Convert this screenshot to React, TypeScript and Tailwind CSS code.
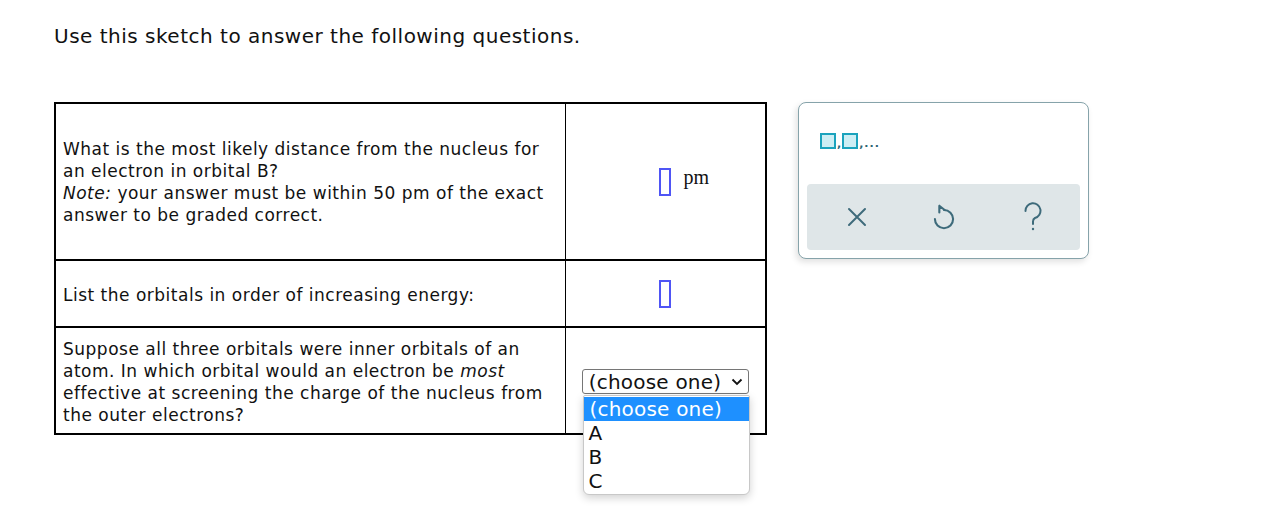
import React from "react";

const font = { fontFamily: '"DejaVu Sans", Verdana, sans-serif' };

function InputBox() {
  return <span className="inline-block w-[12px] h-[28px] border-2 border-[#4f55f5] bg-white align-middle" />;
}

function UndoIcon() {
  return (
    <svg width="28" height="28" viewBox="0 0 24 24" fill="none" stroke="#3e6b7b" strokeWidth="1.8" strokeLinecap="round" strokeLinejoin="round">
      <path d="M12 6 A7.8 7.8 0 1 1 4.2 13.8" />
      <path d="M8 2.5 L8 8.2 M8 2.5 L12.6 6" />
    </svg>
  );
}

function XIcon() {
  return (
    <svg width="22" height="22" viewBox="0 0 22 22" fill="none" stroke="#3e6b7b" strokeWidth="2" strokeLinecap="round">
      <path d="M3 3 L19 19 M19 3 L3 19" />
    </svg>
  );
}

function QIcon() {
  return (
    <svg width="22" height="30" viewBox="0 0 22 30" fill="none" stroke="#3e6b7b" strokeWidth="2" strokeLinecap="round">
      <path d="M3.5 9 A7.5 7.5 0 1 1 13 16 C11.5 16.8 11 17.8 11 19.5 L11 22" />
      <circle cx="11" cy="27" r="1.2" fill="#3e6b7b" stroke="none" />
    </svg>
  );
}

function SetIcon() {
  return (
    <div className="flex items-end">
      <span className="inline-block w-[16px] h-[16px] border-2 border-[#1ba3bd] bg-[#cdeef4]" />
      <span className="text-[#2c6372] text-[11px] leading-none ml-[1px] mr-[1px] font-bold">,</span>
      <span className="inline-block w-[16px] h-[16px] border-2 border-[#1ba3bd] bg-[#cdeef4]" />
      <span className="text-[#2c6372] text-[11px] leading-none ml-[1px] font-bold tracking-[1px]">,...</span>
    </div>
  );
}

export default function App() {
  return (
    <div className="bg-white w-[1286px] h-[528px] relative overflow-hidden text-[#111]" style={font}>
      <div className="pl-[54px] pt-[23px]">
        <div className="text-[20px] leading-[26px] tracking-[0.5px]">Use this sketch to answer the following questions.</div>
        <div className="flex items-start gap-[31px] mt-[53px]">
          <table className="border-collapse border-2 border-black w-[713px] text-[17px] leading-[22px] tracking-[0.5px]">
            <tbody>
              <tr className="h-[157px]">
                <td className="border-y-2 border-r border-black w-[510px] pl-[7px] pr-[8px] align-middle">
                  What is the most likely distance from the nucleus for an electron in orbital B?
                  <br />
                  <i>Note:</i> your answer must be within 50 pm of the exact answer to be graded correct.
                </td>
                <td className="border-y-2 border-black align-middle">
                  <div className="relative flex justify-center">
                    <InputBox />
                    <span className="absolute left-[118px] top-[-2px] text-[20px] tracking-normal" style={{ fontFamily: '"Liberation Serif", serif' }}>pm</span>
                  </div>
                </td>
              </tr>
              <tr className="h-[67px]">
                <td className="border-y-2 border-r border-black pl-[7px] pr-[8px] pt-[2px] align-middle">List the orbitals in order of increasing energy:</td>
                <td className="border-y-2 border-black align-middle">
                  <div className="flex justify-center">
                    <InputBox />
                  </div>
                </td>
              </tr>
              <tr className="h-[107px]">
                <td className="border-y-2 border-r border-black pl-[7px] pr-[8px] pt-[2px] align-middle">
                  Suppose all three orbitals were inner orbitals of an atom. In which orbital would an electron be <i>most</i> effective at screening the charge of the nucleus from the outer electrons?
                </td>
                <td className="border-y-2 border-black align-middle">
                  <div className="relative flex justify-center pt-[2px]">
                    <div className="w-[167px] h-[25px] border border-[#767676] rounded-[3px] flex items-center justify-between pl-[6px] pr-[5px] text-[20px] leading-none bg-white tracking-[0.2px]">
                      <span>(choose one)</span>
                      <svg width="12" height="8" viewBox="0 0 12 8" fill="none" stroke="#111" strokeWidth="1.8">
                        <path d="M1.5 1.5 L6 6 L10.5 1.5" />
                      </svg>
                    </div>
                    <div className="absolute top-[28px] left-[17px] w-[167px] bg-white border border-[#c8c8c8] rounded-b-[6px] rounded-t-[2px] shadow-[0_3px_8px_rgba(0,0,0,0.18)] text-[20px] leading-[24px] py-[1px] z-10 tracking-[0.2px]">
                      <div className="bg-[#1e90ff] text-white pl-[6px]">(choose one)</div>
                      <div className="pl-[5px]">A</div>
                      <div className="pl-[5px]">B</div>
                      <div className="pl-[5px]">C</div>
                    </div>
                  </div>
                </td>
              </tr>
            </tbody>
          </table>
          <div className="w-[291px] h-[157px] border border-[#86a3aa] rounded-[8px] shadow-[-2px_3px_6px_rgba(0,0,0,0.12)] bg-white px-[8px] pt-[30px] pb-[8px] flex flex-col">
            <div className="pl-[13px]">
              <SetIcon />
            </div>
            <div className="mt-[35px] h-[66px] bg-[#dfe6e8] rounded-[4px] flex items-center justify-around px-[6px]">
              <div className="w-[60px] flex justify-center"><XIcon /></div>
              <div className="w-[60px] flex justify-center"><UndoIcon /></div>
              <div className="w-[60px] flex justify-center pl-[4px]"><QIcon /></div>
            </div>
          </div>
        </div>
      </div>
    </div>
  );
}
